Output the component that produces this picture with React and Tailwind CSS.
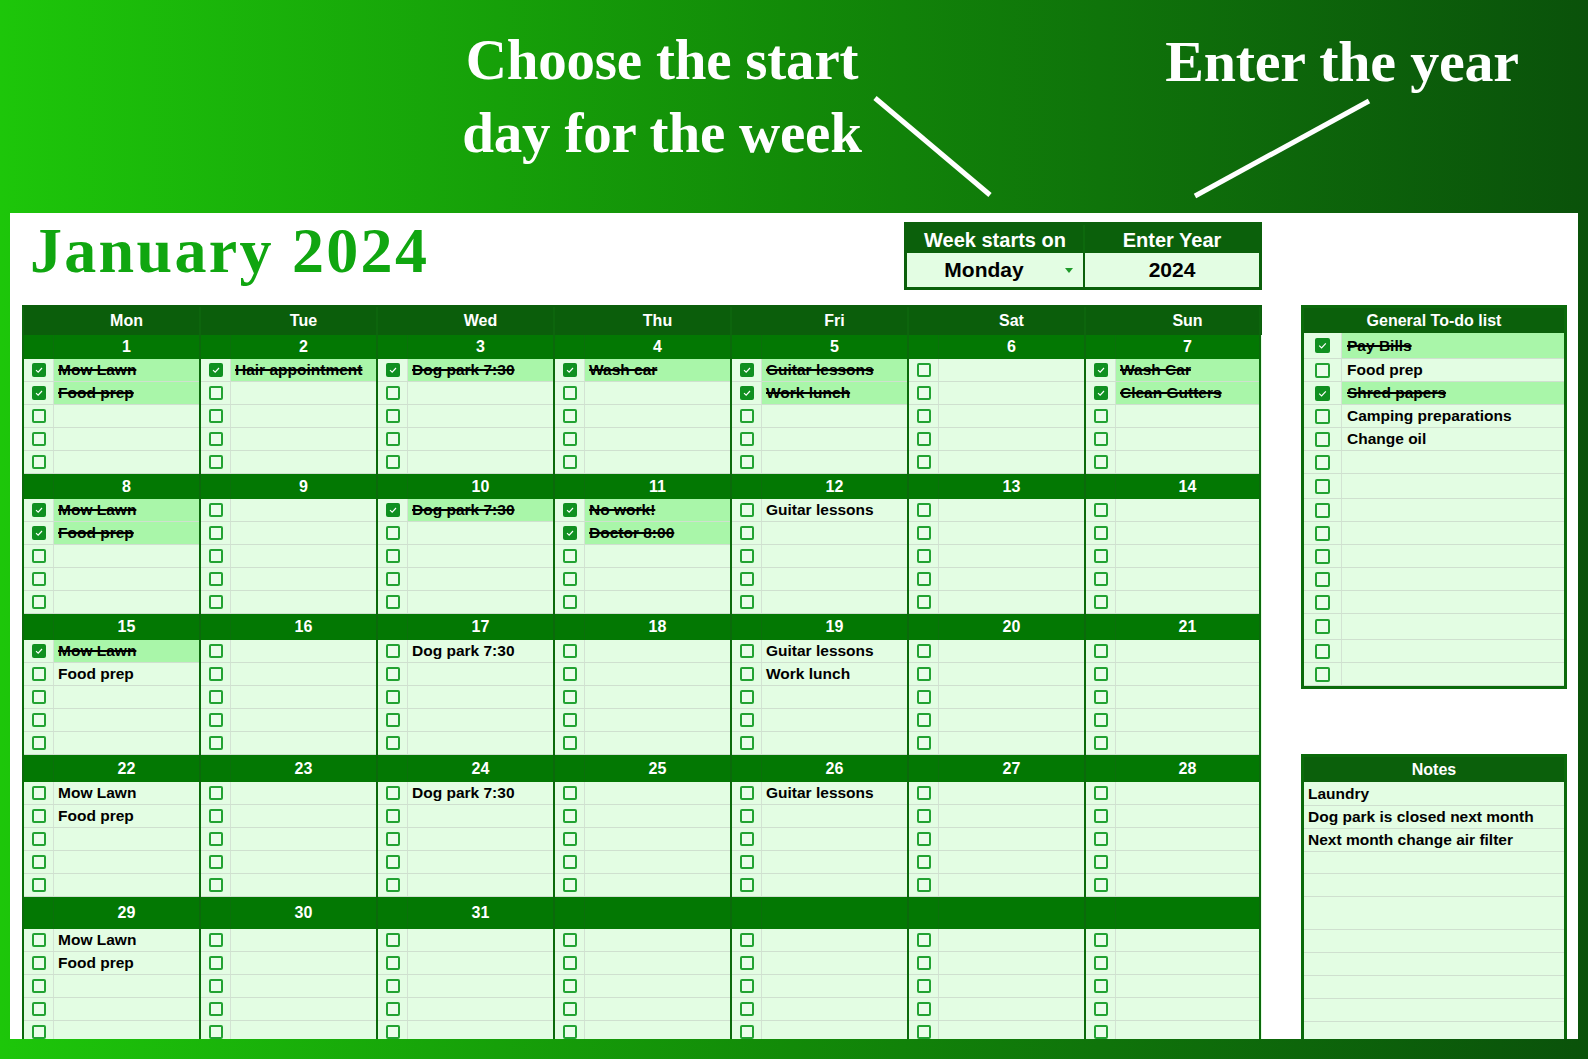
import React from "react";

const ROWH = "h-[23px]";

function Box({ checked, big }) {
  if (big) {
    return checked ? (
      <span className="w-[15px] h-[15px] rounded-[2px] bg-[#0f9020] flex items-center justify-center">
        <svg viewBox="0 0 12 12" className="w-[11px] h-[11px]">
          <path d="M2.4 6.2 L5 8.6 L9.6 3.6" stroke="white" strokeWidth="1.3" fill="none" />
        </svg>
      </span>
    ) : (
      <span className="w-[15px] h-[15px] rounded-[2px] border-2 border-[#22a232] bg-[#eafdea]" />
    );
  }
  return checked ? (
    <span className="w-[14px] h-[14px] rounded-[2px] bg-[#0f9020] flex items-center justify-center">
      <svg viewBox="0 0 12 12" className="w-[10px] h-[10px]">
        <path d="M2.4 6.2 L5 8.6 L9.6 3.6" stroke="white" strokeWidth="1.4" fill="none" />
      </svg>
    </span>
  ) : (
    <span className="w-[14px] h-[14px] rounded-[2px] border-2 border-[#22a232] bg-[#eafdea]" />
  );
}

const days = ["Mon", "Tue", "Wed", "Thu", "Fri", "Sat", "Sun"];

const weeks = [
  {
    h: "h-[24px]",
    cells: [
      { n: 1, items: [["Mow Lawn", 1], ["Food prep", 1]] },
      { n: 2, items: [["Hair appointment", 1]] },
      { n: 3, items: [["Dog park 7:30", 1]] },
      { n: 4, items: [["Wash car", 1]] },
      { n: 5, items: [["Guitar lessons", 1], ["Work lunch", 1]] },
      { n: 6, items: [] },
      { n: 7, items: [["Wash Car", 1], ["Clean Gutters", 1]] },
    ],
  },
  {
    h: "h-[25px]",
    cells: [
      { n: 8, items: [["Mow Lawn", 1], ["Food prep", 1]] },
      { n: 9, items: [] },
      { n: 10, items: [["Dog park 7:30", 1]] },
      { n: 11, items: [["No work!", 1], ["Doctor 8:00", 1]] },
      { n: 12, items: [["Guitar lessons", 0]] },
      { n: 13, items: [] },
      { n: 14, items: [] },
    ],
  },
  {
    h: "h-[26px]",
    cells: [
      { n: 15, items: [["Mow Lawn", 1], ["Food prep", 0]] },
      { n: 16, items: [] },
      { n: 17, items: [["Dog park 7:30", 0]] },
      { n: 18, items: [] },
      { n: 19, items: [["Guitar lessons", 0], ["Work lunch", 0]] },
      { n: 20, items: [] },
      { n: 21, items: [] },
    ],
  },
  {
    h: "h-[27px]",
    cells: [
      { n: 22, items: [["Mow Lawn", 0], ["Food prep", 0]] },
      { n: 23, items: [] },
      { n: 24, items: [["Dog park 7:30", 0]] },
      { n: 25, items: [] },
      { n: 26, items: [["Guitar lessons", 0]] },
      { n: 27, items: [] },
      { n: 28, items: [] },
    ],
  },
  {
    h: "h-[32px]",
    cells: [
      { n: 29, items: [["Mow Lawn", 0], ["Food prep", 0]] },
      { n: 30, items: [] },
      { n: 31, items: [] },
      { n: "", items: [] },
      { n: "", items: [] },
      { n: "", items: [] },
      { n: "", items: [] },
    ],
  },
];

function ItemRow({ item }) {
  const text = item ? item[0] : "";
  const done = item ? item[1] === 1 : false;
  return (
    <div className={`flex shrink-0 ${ROWH} border-b border-[#cfe0cf]`}>
      <div className="w-[30px] flex items-center justify-center border-r border-[#d3e3d3]">
        <Box checked={done} />
      </div>
      <div
        className={`flex-1 flex items-center pl-[4px] whitespace-nowrap overflow-hidden text-[15.5px] font-bold text-black ${
          done ? "bg-[#a9f6a9] line-through decoration-[1.5px]" : ""
        }`}
      >
        {text}
      </div>
    </div>
  );
}

function DayCol({ cell, last, hClass }) {
  const rows = [0, 1, 2, 3, 4];
  return (
    <div className={`flex flex-col border-l-2 border-[#0b6a0b] ${last ? "border-r-2" : ""}`}>
      <div className={`flex shrink-0 ${hClass} bg-[#037803]`}>
        <div className="w-[30px] border-r border-[#0a700a]" />
        <div className="flex-1 flex items-center justify-center text-white font-bold text-[16px]">
          {cell.n}
        </div>
      </div>
      {rows.map((i) => (
        <ItemRow key={i} item={cell.items[i]} />
      ))}
    </div>
  );
}

function Calendar() {
  return (
    <div className="w-[1240px] shrink-0 bg-[#e3fde3]">
      <div className="grid grid-cols-[repeat(7,177px)] h-[30px] bg-[#0b5e0b] border-t-2 border-[#0b5e0b]">
        {days.map((d, i) => (
          <div
            key={d}
            className={`flex border-l-2 border-[#0d650d] ${i === 6 ? "border-r-2" : ""}`}
          >
            <div className="w-[30px]" />
            <div className="flex-1 flex items-center justify-center text-white font-bold text-[16px]">
              {d}
            </div>
          </div>
        ))}
      </div>
      {weeks.map((w, wi) => (
        <div key={wi} className="grid grid-cols-[repeat(7,177px)]">
          {w.cells.map((c, ci) => (
            <DayCol key={ci} cell={c} last={ci === 6} hClass={w.h} />
          ))}
        </div>
      ))}
    </div>
  );
}

const todo = [
  ["Pay Bills", 1],
  ["Food prep", 0],
  ["Shred papers", 1],
  ["Camping preparations", 0],
  ["Change oil", 0],
];
const todoH = [
  "h-[26px]", "h-[23px]", "h-[23px]", "h-[23px]", "h-[23px]", "h-[23px]",
  "h-[25px]", "h-[23px]", "h-[23px]", "h-[23px]", "h-[23px]", "h-[23px]",
  "h-[26px]", "h-[23px]", "h-[23px]",
];

function Todo() {
  return (
    <div className="w-[266px] shrink-0 border-[3px] border-[#0b6a0b] bg-[#e3fde3]">
      <div className="h-[25px] bg-[#0b600b] flex items-center justify-center text-white font-bold text-[16px]">
        General To-do list
      </div>
      {todoH.map((h, i) => {
        const it = todo[i];
        const done = it ? it[1] === 1 : false;
        return (
          <div key={i} className={`flex ${h} border-b border-[#cfe0cf]`}>
            <div className="w-[38px] flex items-center justify-center border-r border-[#d3e3d3]">
              <Box checked={done} big />
            </div>
            <div
              className={`flex-1 flex items-center pl-[5px] whitespace-nowrap text-[15.5px] font-bold text-black ${
                done ? "bg-[#a9f6a9] line-through decoration-[1.5px]" : ""
              }`}
            >
              {it ? it[0] : ""}
            </div>
          </div>
        );
      })}
    </div>
  );
}

const notes = ["Laundry", "Dog park is closed next month", "Next month change air filter"];
const notesH = [
  "h-[24px]", "h-[23px]", "h-[23px]", "h-[22px]", "h-[23px]", "h-[33px]",
  "h-[23px]", "h-[23px]", "h-[23px]", "h-[23px]", "h-[23px]", "h-[23px]",
];

function Notes() {
  return (
    <div className="w-[266px] shrink-0 border-[3px] border-[#0b6a0b] bg-[#e3fde3]">
      <div className="h-[25px] bg-[#0b600b] flex items-center justify-center text-white font-bold text-[16px]">
        Notes
      </div>
      {notesH.map((h, i) => (
        <div
          key={i}
          className={`flex items-center ${h} border-b border-[#cfe0cf] pl-[4px] whitespace-nowrap text-[15.5px] font-bold text-black`}
        >
          {notes[i] || ""}
        </div>
      ))}
    </div>
  );
}

function WeekBox() {
  return (
    <div className="mt-[9px] w-[358px] border-[3px] border-[#0b600b] bg-[#e3fde3]">
      <div className="grid grid-cols-[176px_176px] h-[28px] bg-[#0b600b]">
        <div className="flex items-center justify-center text-white font-bold text-[20px]">
          Week starts on
        </div>
        <div className="flex items-center justify-center text-white font-bold text-[20px] border-l-2 border-[#0d690d]">
          Enter Year
        </div>
      </div>
      <div className="grid grid-cols-[176px_176px] h-[34px]">
        <div className="relative flex items-center justify-center pr-[22px] text-black font-bold text-[21px]">
          Monday
          <svg viewBox="0 0 8 5" className="absolute right-[10px] top-[15px] w-[8px] h-[5px]">
            <path d="M0 0 L8 0 L4 5 Z" fill="#1f9a2a" />
          </svg>
        </div>
        <div className="flex items-center justify-center text-black font-bold text-[21px] border-l-2 border-[#0b600b]">
          2024
        </div>
      </div>
    </div>
  );
}

export default function App() {
  return (
    <div className="w-[1588px] h-[1059px] overflow-hidden bg-linear-to-r from-[#1dc60a] via-[#128a08] to-[#0a520a] font-['Liberation_Sans',Arial,sans-serif]">
      <div className="relative h-[213px] flex">
        <div className="ml-[437px] w-[450px] pt-[23px] text-center text-white font-bold font-['Liberation_Serif',serif] text-[57px] leading-[73px] tracking-[-0.2px]">
          <div>Choose the start</div>
          <div>day for the week</div>
        </div>
        <div className="ml-[255px] w-[400px] pt-[25px] text-center text-white font-bold font-['Liberation_Serif',serif] text-[58px] leading-[73px] tracking-[-0.2px]">
          Enter the year
        </div>
        <svg className="absolute inset-0 w-[1588px] h-[213px] pointer-events-none" viewBox="0 0 1588 213">
          <line x1="875" y1="98" x2="990" y2="195" stroke="white" strokeWidth="5" />
          <line x1="1369" y1="101" x2="1195" y2="196" stroke="white" strokeWidth="5" />
        </svg>
      </div>
      <div className="ml-[10px] w-[1568px] h-[826px] bg-white overflow-hidden flex pl-[12px]">
        <div className="w-[1240px] flex flex-col">
          <div className="h-[92px] shrink-0 flex justify-between items-start">
            <h1 className="ml-[8px] mt-[6px] text-[64px] leading-[64px] font-bold text-[#10a610] font-['Liberation_Serif',serif] tracking-[2.3px]">
              January 2024
            </h1>
            <WeekBox />
          </div>
          <Calendar />
        </div>
        <div className="ml-[39px] w-[266px] pt-[92px] flex flex-col">
          <Todo />
          <div className="h-[65px] shrink-0" />
          <Notes />
        </div>
      </div>
    </div>
  );
}
